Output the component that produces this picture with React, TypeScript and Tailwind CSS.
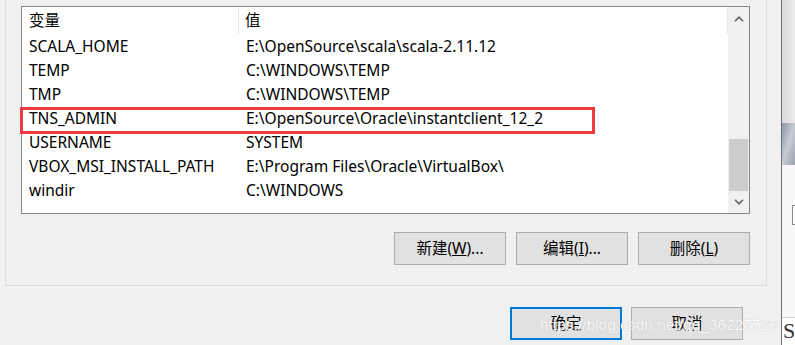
import React from "react"

const rows: [string, string][] = [
  ["SCALA_HOME", "E:\\OpenSource\\scala\\scala-2.11.12"],
  ["TEMP", "C:\\WINDOWS\\TEMP"],
  ["TMP", "C:\\WINDOWS\\TEMP"],
  ["TNS_ADMIN", "E:\\OpenSource\\Oracle\\instantclient_12_2"],
  ["USERNAME", "SYSTEM"],
  ["VBOX_MSI_INSTALL_PATH", "E:\\Program Files\\Oracle\\VirtualBox\\"],
  ["windir", "C:\\WINDOWS"],
]

function Chevron({ up }: { up?: boolean }) {
  return (
    <svg width="10" height="6" viewBox="0 0 10 6" className="block">
      <path
        d={up ? "M1 5.2 L5 1.2 L9 5.2" : "M1 0.8 L5 4.8 L9 0.8"}
        fill="none"
        stroke="#606060"
        strokeWidth="1.6"
      />
    </svg>
  )
}

function Button({ children, primary }: { children: React.ReactNode; primary?: boolean }) {
  return (
    <div
      className={
        "flex h-[33px] w-[112px] items-center justify-center bg-[#e1e1e1] text-[15.5px] text-black " +
        (primary ? "border-2 border-[#0078d7]" : "border border-[#adadad]")
      }
    >
      {children}
    </div>
  )
}

export default function App() {
  return (
    <div
      className="relative flex h-[345px] w-[795px] overflow-hidden bg-[#f0f0f0] text-black"
      style={{ fontFamily: "'Noto Sans', 'Noto Sans CJK SC', sans-serif" }}
    >
      {/* dialog */}
      <div className="flex w-[781px] flex-col">
        <div className="ml-[5px] flex h-[286px] w-[762px] flex-col border-x border-b border-[#dcdcdc] pl-[15px] pt-[6px]">
          {/* list view */}
          <div className="flex h-[208px] w-[729px] border border-[#828790] bg-white">
            <div className="flex flex-1 flex-col">
              <div className="flex h-[28px] items-center text-[15.5px]">
                <div className="flex h-[26px] w-[217px] items-center border-r border-[#e5e5e5] pl-[7px]">变量</div>
                <div className="flex h-[26px] flex-1 items-center border-r border-[#e5e5e5] pl-[6px]">值</div>
              </div>
              {rows.map(([k, v]) => (
                <div key={k} className="flex h-[24px] items-center text-[15.5px] leading-none">
                  <div className="w-[218px] pl-[7px]">{k}</div>
                  <div className="flex-1 pl-[6px]">{v}</div>
                </div>
              ))}
            </div>
            {/* scrollbar */}
            <div className="flex w-[21px] flex-col items-center bg-[#f0f0f0]">
              <div className="flex h-[24px] items-center">
                <Chevron up />
              </div>
              <div className="mt-[108px] h-[52px] w-[19px] bg-[#cdcdcd]" />
              <div className="mt-[6px] flex h-[10px] items-center">
                <Chevron />
              </div>
            </div>
          </div>
          <div className="mt-[18px] flex w-[729px] justify-end gap-[10px]">
            <Button>
              新建(<span className="underline">W</span>)...
            </Button>
            <Button>
              编辑(<span className="underline">I</span>)...
            </Button>
            <Button>
              删除(<span className="underline">L</span>)
            </Button>
          </div>
        </div>
        <div className="mt-[21px] flex gap-[9px] pl-[510px]">
          <Button primary>确定</Button>
          <Button>取消</Button>
        </div>
      </div>

      {/* neighbouring window edge */}
      <div className="flex w-[14px] flex-col border-l border-[#6e6e6e]">
        <div className="h-[123px] bg-gradient-to-r from-[#d9d9d9] to-[#ececec]" />
        <div className="h-[42px] bg-gradient-to-br from-[#8a96a6] via-[#c7ccd4] to-[#9aa3ae]" />
        <div className="relative h-[152px] bg-[#f7f7f7]">
          <div className="absolute left-[10px] top-[40px] h-[20px] w-[8px] border border-[#8a8a8a] bg-white" />
        </div>
        <div className="flex-1 border-t border-[#cfcfcf] bg-white pl-[1px] text-[22px] leading-[26px] text-[#333]" style={{ fontFamily: "'Liberation Serif', serif" }}>
          S
        </div>
      </div>

      {/* watermark */}
      <div
        className="pointer-events-none absolute left-[540px] top-[315px] text-[15.5px] leading-[20px] text-white/95"
        style={{ fontFamily: "'Liberation Sans', sans-serif", textShadow: "0 0 1px #b0b0b0" }}
      >
        https://blog.csdn.net/qq_36227528
      </div>

      {/* highlight */}
      <div className="pointer-events-none absolute left-[20px] top-[107px] h-[27px] w-[575px] border-[3px] border-[#ee3a3f]" />
    </div>
  )
}
